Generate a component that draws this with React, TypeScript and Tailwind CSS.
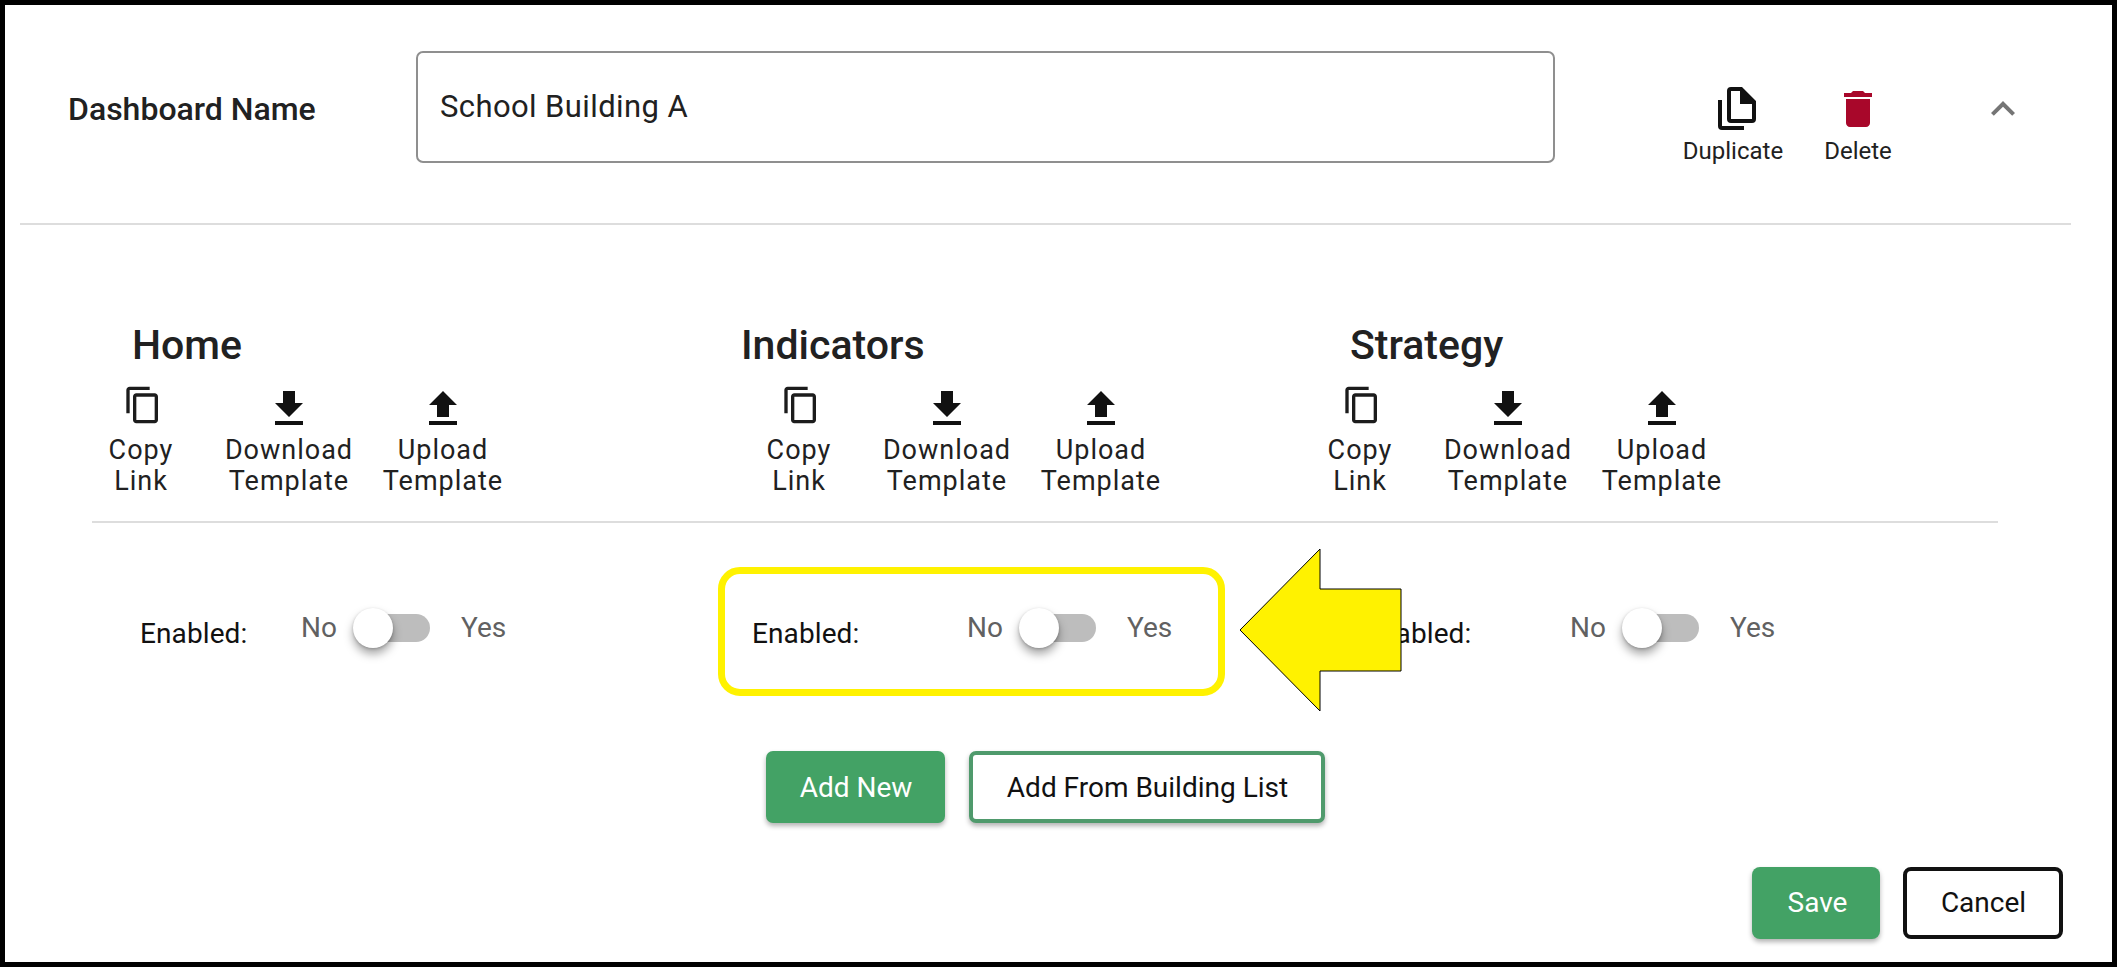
const font = "[font-family:Roboto,'Noto_Sans',sans-serif]";

function Icon({ d, className }: { d: string; className: string }) {
  return (
    <svg viewBox="0 0 24 24" fill="currentColor" fillRule="evenodd" className={className}>
      <path d={d} />
    </svg>
  );
}

const COPY = "M16 1H4c-1.1 0-2 .9-2 2v14h2V3h12V1zm3 4H8c-1.1 0-2 .9-2 2v14c0 1.1.9 2 2 2h11c1.1 0 2-.9 2-2V7c0-1.1-.9-2-2-2zm0 16H8V7h11v14z";
const DOWNLOAD = "M19 9h-4V3H9v6H5l7 7 7-7zM5 18v2h14v-2H5z";
const UPLOAD = "M9 16h6v-6h4l-7-7-7 7h4zm-4 2h14v2H5z";
const DUPLICATE = "M8.5 1H14l7 7v9a2 2 0 0 1-2 2H8.5a2 2 0 0 1-2-2V3a2 2 0 0 1 2-2zM8.5 3v14H19V9.5H13V3zM2 7.5h2v13h11v2H4a2 2 0 0 1-2-2z";
const TRASH = "M6 19c0 1.1.9 2 2 2h8c1.1 0 2-.9 2-2V7H6v12zM19 4h-3.5l-1-1h-5l-1 1H5v2h14V4z";
const CHEVRON = "M12 8l-6 6 1.41 1.41L12 10.83l4.59 4.58L18 14z";

function Action({ icon, small, label, w }: { icon: string; small?: boolean; label: string[]; w: string }) {
  return (
    <div className={`flex flex-col items-center ${w}`}>
      <div className="h-[48px] flex items-start justify-center">
        <Icon d={icon} className={small ? "ml-[3px] w-[40px] h-[40px] text-[#1c1c1c]" : "w-[48px] h-[48px] text-[#111111]"} />
      </div>
      <div className="text-[27px] leading-[31px] tracking-[1px] text-[#212121] text-center mt-[2px]">
        {label.map((l) => (
          <div key={l}>{l}</div>
        ))}
      </div>
    </div>
  );
}

function Section({ title, pad }: { title: string; pad: string }) {
  return (
    <div>
      <div className={`text-[41px] leading-[44px] font-medium text-[#212121] ${pad}`}>{title}</div>
      <div className="flex gap-[22px] mt-[18px]">
        <Action icon={COPY} small label={["Copy", "Link"]} w="w-[120px]" />
        <Action icon={DOWNLOAD} label={["Download", "Template"]} w="w-[132px]" />
        <Action icon={UPLOAD} label={["Upload", "Template"]} w="w-[132px]" />
      </div>
    </div>
  );
}

function Toggle() {
  return (
    <div className="relative w-[77px] h-[40px]">
      <div className="absolute left-[6px] right-0 top-[6px] h-[28px] rounded-full bg-[#bdbdbd]" />
      <div className="absolute left-0 top-0 w-[40px] h-[40px] rounded-full bg-white shadow-[0_6px_10px_rgba(0,0,0,0.35),0_1px_3px_rgba(0,0,0,0.2)]" />
    </div>
  );
}

function Enabled({ labelW }: { labelW: string }) {
  return (
    <div className="flex items-start">
      <div className={`${labelW} pt-[6px] text-[28px] leading-[40px] tracking-[0.1px] text-[#111111]`}>Enabled:</div>
      <div className="w-[52px] text-[28px] leading-[36px] text-[#616161] pt-[2px]">No</div>
      <Toggle />
      <div className="ml-[31px] text-[28px] leading-[36px] text-[#616161] pt-[2px]">Yes</div>
    </div>
  );
}

export default function App() {
  return (
    <div className={`relative w-[2117px] h-[967px] overflow-hidden bg-white border-[5px] border-black ${font}`}>
      <div className="flex items-start h-[218px] ml-[63px]">
        <div className="w-[348px] pt-[84px] text-[32px] leading-[40px] font-medium text-[#212121]">Dashboard Name</div>
        <div className="mt-[46px] w-[1139px] h-[112px] rounded-[7px] border-2 border-[#8f8f8f] pl-[22px] pt-[35px] text-[31px] leading-[38px] text-[#212121] tracking-[0.4px]">
          School Building A
        </div>
        <div className="ml-[108px] mt-[80px] w-[140px] flex flex-col items-center">
          <Icon d={DUPLICATE} className="ml-[10px] w-[48px] h-[48px] text-[#111111]" />
          <div className="mt-[2px] text-[24px] leading-[32px] text-[#212121]">Duplicate</div>
        </div>
        <div className="mt-[80px] w-[110px] flex flex-col items-center">
          <Icon d={TRASH} className="w-[48px] h-[48px] text-[#a8072a]" />
          <div className="mt-[2px] text-[24px] leading-[32px] text-[#212121]">Delete</div>
        </div>
        <Icon d={CHEVRON} className="ml-[66px] mt-[80px] w-[48px] h-[48px] text-[#757575]" />
      </div>
      <div className="h-[2px] bg-[#dddddd] ml-[15px] mr-[41px]" />

      <div className="ml-[76px] mt-[98px] grid grid-cols-[658px_561px_1fr]">
        <Section title="Home" pad="pl-[51px]" />
        <Section title="Indicators" pad="pl-[2px]" />
        <Section title="Strategy" pad="pl-[50px]" />
      </div>

      <div className="h-[2px] bg-[#dddddd] ml-[87px] mr-[114px] mt-[24px]" />

      <div className="ml-[135px] mt-[85px] grid grid-cols-[612px_612px_1fr]">
        <Enabled labelW="w-[161px]" />
        <Enabled labelW="w-[215px]" />
        <Enabled labelW="w-[206px]" />
      </div>

      <div className="flex gap-[24px] mt-[97px] pl-[761px]">
        <button className="w-[179px] h-[72px] pt-[2px] pl-[1px] rounded-[7px] bg-[#43a265] text-white text-[28px] shadow-[0_3px_5px_rgba(0,0,0,0.3)]">
          Add New
        </button>
        <button className="w-[356px] h-[72px] pt-[2px] pl-[1px] rounded-[7px] bg-white border-[4px] border-[#4f9a6c] text-[#111111] text-[28px] shadow-[0_3px_5px_rgba(0,0,0,0.3)]">
          Add From Building List
        </button>
      </div>

      <div className="flex justify-end gap-[23px] mt-[44px] mr-[49px]">
        <button className="w-[128px] h-[72px] pl-[3px] rounded-[8px] bg-[#43a265] text-white text-[28px] shadow-[0_3px_5px_rgba(0,0,0,0.3)]">
          Save
        </button>
        <button className="w-[160px] h-[72px] pl-[1px] rounded-[8px] bg-white border-[4px] border-[#111111] text-[#111111] text-[28px]">
          Cancel
        </button>
      </div>

      <div className="absolute left-[713px] top-[562px] w-[507px] h-[129px] rounded-[22px] border-[7px] border-[#fff200]" />
      <svg className="absolute left-[1230px] top-[540px]" width="175" height="170" viewBox="0 0 175 170">
        <path d="M5 85 L85 4 V44 H166 V126 H85 V166 Z" fill="#fff200" stroke="#000000" strokeWidth="1" />
      </svg>
    </div>
  );
}
